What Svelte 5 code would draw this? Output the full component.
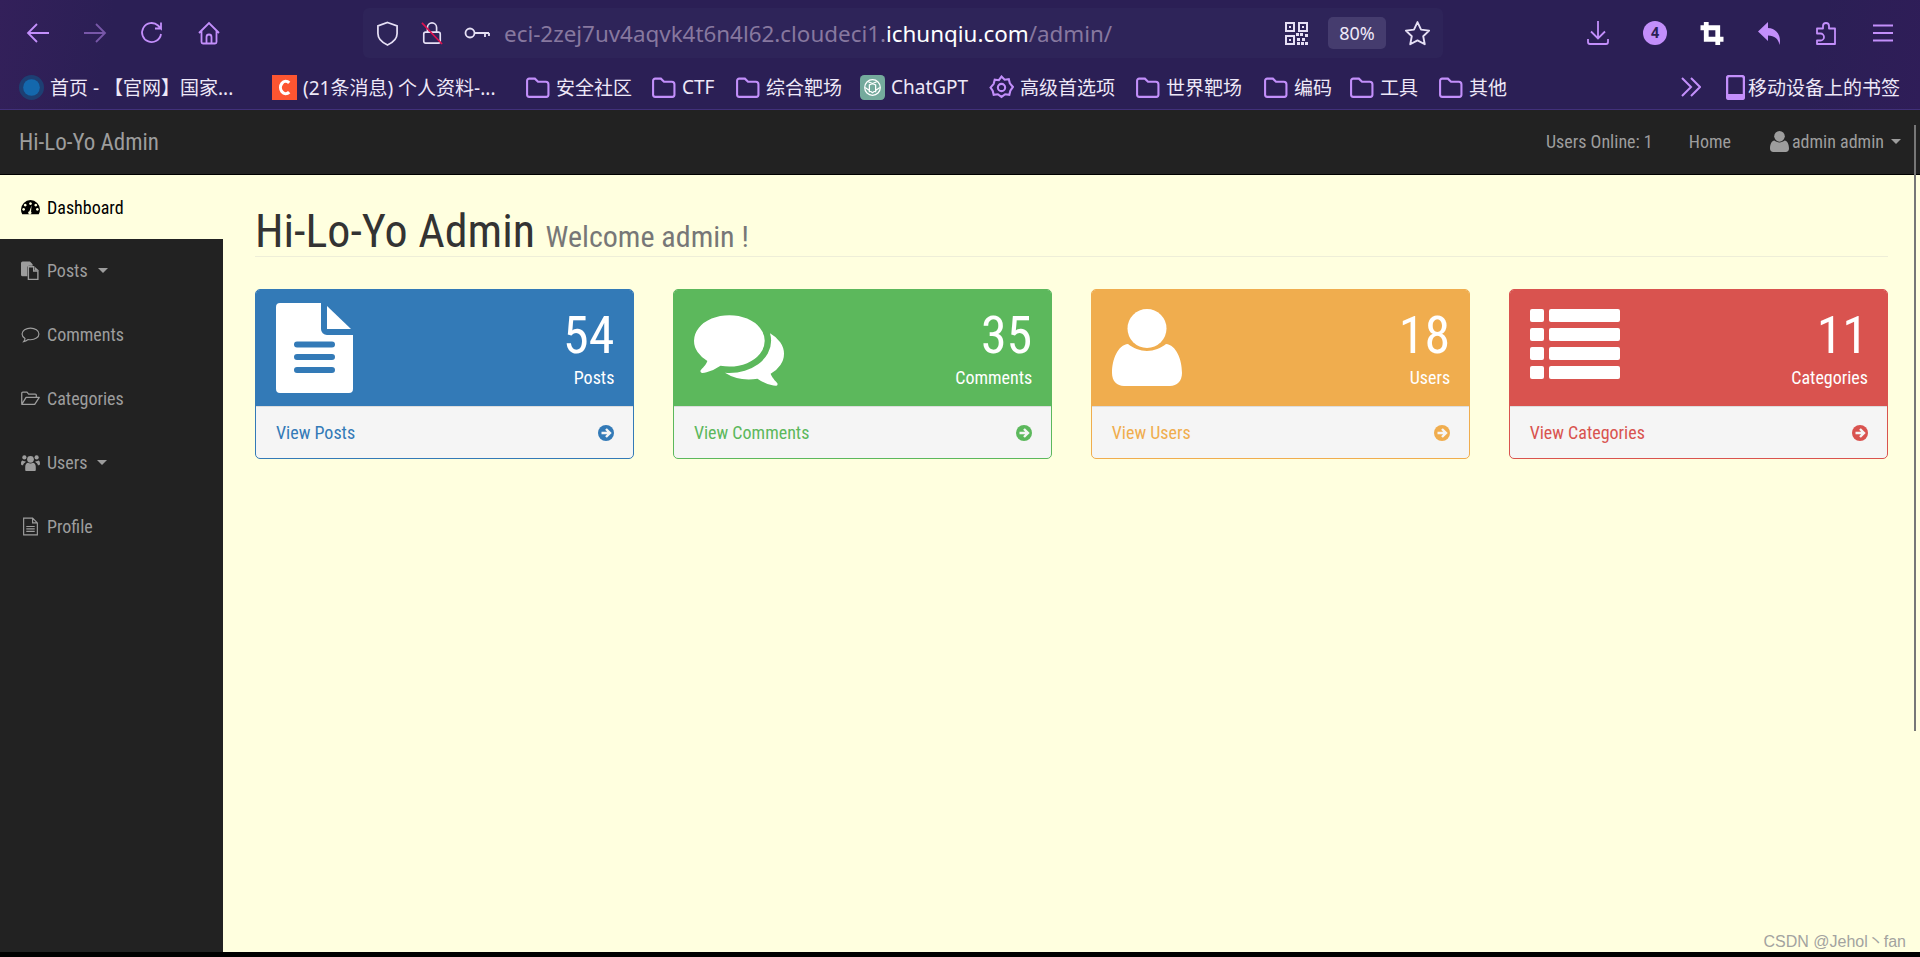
<script>
	const bookmarks = [
		{ icon: 'seal', label: '首页 - 【官网】国家...', width: 186, gap: 36 },
		{ icon: 'csdn', label: '(21条消息) 个人资料-...', width: 197, gap: 25 },
		{ icon: 'folder', label: '安全社区', width: 76, gap: 19 },
		{ icon: 'folder', label: 'CTF', width: 33, gap: 20 },
		{ icon: 'folder', label: '综合靶场', width: 76, gap: 18 },
		{ icon: 'gpt', label: 'ChatGPT', width: 79, gap: 19 },
		{ icon: 'gear', label: '高级首选项', width: 96, gap: 19 },
		{ icon: 'folder', label: '世界靶场', width: 76, gap: 21 },
		{ icon: 'folder', label: '编码', width: 38, gap: 17 },
		{ icon: 'folder', label: '工具', width: 38, gap: 20 },
		{ icon: 'folder', label: '其他', width: 38, gap: 0 },
	]

	const navItems = [
		{ icon: 'gauge', label: 'Dashboard', active: true },
		{ icon: 'files', label: 'Posts', caret: true },
		{ icon: 'comment', label: 'Comments' },
		{ icon: 'open', label: 'Categories' },
		{ icon: 'users', label: 'Users', caret: true },
		{ icon: 'page', label: 'Profile' },
	]

	const cards = [
		{ icon: 'doc', count: 54, label: 'Posts', link: 'View Posts', color: '#337ab7' },
		{ icon: 'chat', count: 35, label: 'Comments', link: 'View Comments', color: '#5cb85c' },
		{ icon: 'user', count: 18, label: 'Users', link: 'View Users', color: '#f0ad4e' },
		{ icon: 'list', count: 11, label: 'Categories', link: 'View Categories', color: '#d9534f' },
	]

	const chatPath =
		'M1408 768q0 139-94 257t-256.5 186.5-353.5 68.5q-86 0-176-16-124 88-278 128-36 9-86 16h-3q-11 0-20.5-8t-11.5-21q-1-3-1-6.5t.5-6.5 2-6l2.5-5 3.5-5.5 4-5 4.5-5 4-4.5q5-6 23-25t26-29.5 22.5-29 25-38.5 20.5-44q-124-72-195-177t-71-224q0-139 94-257t256.5-186.5 353.5-68.5 353.5 68.5 256.5 186.5 94 257zm384 256q0 120-71 224.5t-195 176.5q10 24 20.5 44t25 38.5 22.5 29 26 29.5 23 25q1 1 4 4.5t4.5 5 4 5 3.5 5.5l2.5 5 2 6 .5 6.5-1 6.5q-3 14-13 22t-22 7q-50-7-86-16-154-40-278-128-90 16-176 16-271 0-472-132 58 4 88 4 161 0 309-45t264-129q125-92 192-212t67-254q0-77-23-152 129 71 204 178t75 230z'
</script>

{#snippet bookmarkIcon(name)}
	{#if name === 'folder'}
		<svg class="bm-icon" viewBox="0 0 24 24" fill="none" stroke="#c38ffb" stroke-width="2"><path d="M2 5.500a2 2 0 0 1 2-2h5.500l3 3H20a2.500 2.500 0 0 1 2.500 2.500v10a2 2 0 0 1-2 2H4a2 2 0 0 1-2-2z" /></svg>
	{:else if name === 'seal'}
		<svg class="bm-icon" viewBox="0 0 24 24"><circle cx="12" cy="12" r="12" fill="#1d3f73" /><circle cx="12" cy="12" r="8" fill="#1468ad" /></svg>
	{:else if name === 'csdn'}
		<svg class="bm-icon" viewBox="0 0 24 24"><rect width="24" height="24" fill="#fc5531" /><path d="M16.500 7.500a5 6 0 1 0 0 9" fill="none" stroke="#fff" stroke-width="3" /></svg>
	{:else if name === 'gpt'}
		<svg class="bm-icon" viewBox="0 0 24 24"><rect width="24" height="24" rx="4" fill="#74aa9c" /><g fill="none" stroke="#fff" stroke-width="1.200"><circle cx="12" cy="12" r="7.500" /><path d="M8 6.500l7 3v7M16 6.500l-7 3v7M5 12l7 5 7-5" /></g></svg>
	{:else}
		<svg class="bm-icon" viewBox="0 0 24 24" fill="none" stroke="#c38ffb" stroke-width="2"><path d="M12 1.500l3 3 4-.5 1 4 3 3.500-2.500 3.500-1 4-4-.5-3.500 2.500-3.500-2.500-4 .5-1-4L1.500 12l3-3.500 1-4 4 .5z" /><circle cx="12" cy="12" r="3.500" /></svg>
	{/if}
{/snippet}

{#snippet sideIcon(name)}
	<svg class="side-icon" viewBox="0 -1 18 18">
		{#if name === 'gauge'}
			<path fill-rule="evenodd" d="M9 1a9 9 0 0 1 9 9c0 1.700-.4 3.200-1.200 4.500H1.200A9 9 0 0 1 0 10a9 9 0 0 1 9-9zM4 4.500a1.300 1.300 0 1 0 .01 0zM2.500 8.500a1.300 1.300 0 1 0 .01 0zM14 4.500a1.300 1.300 0 1 0 .01 0zM15.500 8.500a1.300 1.300 0 1 0 .01 0zM9 3a1.300 1.300 0 1 0 .01 0zM10 6l-2 5.500a1.500 1.500 0 1 0 1.500.5z" />
		{:else if name === 'files'}
			<path d="M0 1A1.500 1.500 0 0 1 1.500-.5h7L11 2v1.500H7.500A1.500 1.500 0 0 0 6 5v8.500H1.500A1.500 1.500 0 0 1 0 12z" />
			<path d="M7 4.500h5v4h4V16.400H7z" fill="none" stroke="currentColor" stroke-width="1.300" />
			<path d="M13 4.500l4 3.500h-4z" />
		{:else if name === 'comment'}
			<path d="M9 2c4.300 0 8 2.400 8 5.500S13.300 13 9 13c-.8 0-1.500-.1-2.200-.2-1.200.9-2.500 1.700-4.300 2 .7-.9 1.200-2 1.300-3C2.200 10.800 1 9.200 1 7.500 1 4.400 4.700 2 9 2z" fill="none" stroke="currentColor" stroke-width="1.100" />
		{:else if name === 'open'}
			<path d="M.7 13V3a1 1 0 0 1 1-1h4l1.500 1.800h6.300a1 1 0 0 1 1 1V7M.7 13.500h12.300l4.300-6.500H4.800z" fill="none" stroke="currentColor" stroke-width="1.200" stroke-linejoin="round" />
		{:else if name === 'users'}
			<circle cx="9" cy="5" r="3.200" /><circle cx="3.200" cy="3.200" r="2" /><circle cx="14.800" cy="3.200" r="2" />
			<path d="M4 15v-3c0-2.500 1.500-3.700 2.700-3.700 1.300 1 3.300 1 4.600 0 1.200 0 2.700 1.200 2.700 3.700v3c0 .6-.5 1-1 1H5c-.5 0-1-.4-1-1z" />
			<path d="M0 9c0-2 .7-3 1.500-3 .8.800 2 .900 3 .500-.3.600-.4 1-.4 1.500C2.800 8.500 2 9.800 2 10.500H1c-.6 0-1-.6-1-1.500zM18 9c0-2-.7-3-1.500-3-.8.800-2 .900-3 .500.3.600.4 1 .4 1.500 1.300.5 2.100 1.800 2.100 2.500h1c.6 0 1-.6 1-1.500z" />
		{:else}
			<path d="M2.500.1h8.500l4.500 4.500v11.300h-13zM11 .1v4.500h4.500M5 8h8M5 10.300h8M5 12.600h8" fill="none" stroke="currentColor" stroke-width="1.100" />
		{/if}
	</svg>
{/snippet}

{#snippet cardIcon(name)}
	{#if name === 'doc'}
		<svg class="card-icon doc" viewBox="0 0 77 90" fill="#fff">
			<path fill-rule="evenodd" d="M4 0H45V26a6 6 0 0 0 6 6H77V86a4 4 0 0 1-4 4H4a4 4 0 0 1-4-4V4a4 4 0 0 1 4-4zM21 38.500a2 2 0 0 0 0 6H56a2 2 0 0 0 0-6zM21 51a2 2 0 0 0 0 6H56a2 2 0 0 0 0-6zM21 64a2 2 0 0 0 0 6H56a2 2 0 0 0 0-6z" />
			<path d="M51 3L75 26H51z" />
		</svg>
	{:else if name === 'chat'}
		<svg class="card-icon chat" viewBox="0 256 1792 1408" fill="#fff"><path d={chatPath} /></svg>
	{:else if name === 'user'}
		<svg class="card-icon person" viewBox="0 0 70 77" fill="#fff">
			<circle cx="35" cy="19.500" r="19.500" />
			<path d="M16 35c5 4 12 7 19 7s14-3 19-7c10 1 16 15 16 29 0 8-5 13-12 13H12C5 77 0 72 0 64 0 50 6 36 16 35z" />
		</svg>
	{:else}
		<svg class="card-icon list" viewBox="0 0 90 70" fill="#fff">
			{#each [0, 19, 38, 57] as y}
				<rect {y} width="14" height="13" rx="2" />
				<rect x="19" {y} width="71" height="13" rx="2" />
			{/each}
		</svg>
	{/if}
{/snippet}

<div class="window">
	<header class="chrome">
		<div class="toolbar">
			<div class="tools">
				<svg class="tb first" viewBox="0 0 24 24"><path d="M23 12H2M11 3l-9 9 9 9" /></svg>
				<svg class="tb dim" viewBox="0 0 24 24"><path d="M1 12h21M13 3l9 9-9 9" /></svg>
				<svg class="tb" viewBox="0 0 24 24"><path d="M21 13a9.500 9.500 0 1 1-3-8.500L21 7.500V1.500M21 7.500h-6" /></svg>
				<svg class="tb" viewBox="0 0 24 24"><path d="M2 12L12 2l10 10M4.500 10v11a1.500 1.500 0 0 0 1.500 1.500h12a1.500 1.500 0 0 0 1.500-1.500V10M9.500 22v-6a2.500 2.500 0 0 1 5 0v6" /></svg>
			</div>
			<div class="urlbar">
				<svg class="ub shield" viewBox="0 0 24 26"><path d="M12 1.500l10 3.500v8c0 6-4.500 9.500-10 12C6.500 22.500 2 19 2 13V5z" /></svg>
				<svg class="ub lock" viewBox="0 0 24 26">
					<path d="M5 12h14a2 2 0 0 1 2 2v8a2 2 0 0 1-2 2H5a2 2 0 0 1-2-2v-8a2 2 0 0 1 2-2zM7 12V7a5 5 0 0 1 10 0v5" />
					<path d="M1 2l22 23" class="slash" />
				</svg>
				<svg class="ub key" viewBox="0 0 26 14"><circle cx="6" cy="7" r="4.500" /><path d="M10.500 7H25M21 7v4M25 7v3" /></svg>
				<div class="url">eci-2zej7uv4aqvk4t6n4l62.cloudeci1.<b>ichunqiu.com</b>/admin/</div>
				<svg class="qr" viewBox="0 0 23 23" fill="#e6e0f5">
					<path fill-rule="evenodd" d="M0 0h10v10H0zM2 2v6h6V2zM13 0h10v10H13zM15 2v6h6V2zM0 13h10v10H0zM2 15v6h6v-6z" />
					<path d="M4 4h2v2H4zM17 4h2v2h-2zM4 17h2v2H4zM11 11h3v3h-3zM15 11h3v3h-3zM20 12h3v3h-3zM12 16h3v3h-3zM17 16h3v3h-3zM12 20h3v3h-3zM20 20h3v3h-3zM16 20h3v3h-3z" />
				</svg>
				<div class="zoom-badge">80%</div>
				<svg class="ub star" viewBox="0 0 26 26"><path d="M13 2l3.400 7.200 7.800 1-5.700 5.400 1.500 7.800-7-3.800-7 3.800 1.500-7.800L1.800 10.200l7.800-1z" stroke-linejoin="round" /></svg>
			</div>
			<div class="actions">
				<svg class="tb" viewBox="0 0 24 26"><path d="M12 1v17M5 11.500l7 7 7-7M2 19v3a2 2 0 0 0 2 2h16a2 2 0 0 0 2-2v-3" /></svg>
				<div class="count">4</div>
				<svg class="crop" viewBox="0 0 24 24" fill="none" stroke="#fff" stroke-width="5"><path d="M6 0v18h18M0 6h18v18" /></svg>
				<svg class="reply" viewBox="0 0 22 24" fill="#c38ffb"><path d="M10 1v6c7 .5 12 5 12 13 0 1.500-.3 3-.5 4-1-6-5-9.500-11.500-9.500V20L0 10.500z" /></svg>
				<svg class="tb" viewBox="0 0 24 26"><path d="M3 8.500h6V6a3 3 0 0 1 6 0v2.500h6V24H3v-3.500h3.500a3.500 3.500 0 0 0 0-7H3z" stroke-linejoin="round" /></svg>
				<svg class="tb" viewBox="0 0 24 24"><path d="M2 4.500h20M2 12h20M2 19.500h20" /></svg>
			</div>
		</div>
		<div class="bookmarks">
			{#each bookmarks as b}
				<div class="bm" style="margin-right: {b.gap}px">
					{@render bookmarkIcon(b.icon)}
					<span style="width: {b.width}px">{b.label}</span>
				</div>
			{/each}
			<div class="bm-right">
				<svg class="chevrons" viewBox="0 0 20 20" fill="none" stroke="#c38ffb" stroke-width="2"><path d="M1 1l9 9-9 9M10 1l9 9-9 9" /></svg>
				<svg class="phone" viewBox="0 0 19 25"><rect x="1" y="1" width="17" height="23" rx="2.500" fill="none" stroke="#c38ffb" stroke-width="2.500" /><rect y="19" x="1" width="17" height="5" rx="1" fill="#c38ffb" /></svg>
				<span>移动设备上的书签</span>
			</div>
		</div>
	</header>

	<nav class="navbar">
		<a class="brand" href="#top">Hi-Lo-Yo Admin</a>
		<div class="nav-right">
			<span>Users Online: 1</span>
			<span>Home</span>
			<span class="account">
				<svg class="nav-user" viewBox="0 0 70 77" fill="currentColor">
					<circle cx="35" cy="19.500" r="19.500" />
					<path d="M16 35c5 4 12 7 19 7s14-3 19-7c10 1 16 15 16 29 0 8-5 13-12 13H12C5 77 0 72 0 64 0 50 6 36 16 35z" />
				</svg>
				admin admin<i class="caret"></i>
			</span>
		</div>
	</nav>

	<div class="body">
		<aside class="sidebar">
			{#each navItems as item}
				<a class="side-item" class:active={item.active} href="#top">
					{@render sideIcon(item.icon)}
					{item.label}
					{#if item.caret}<i class="caret"></i>{/if}
				</a>
			{/each}
		</aside>

		<main class="content">
			<h1>Hi-Lo-Yo Admin <small>Welcome admin !</small></h1>
			<div class="cards">
				{#each cards as card}
					<section class="card" style="--accent: {card.color}">
						<div class="card-head">
							{@render cardIcon(card.icon)}
							<div class="stat">
								<div class="count-num">{card.count}</div>
								<div class="count-label">{card.label}</div>
							</div>
						</div>
						<a class="card-foot" href="#top">
							{card.link}
							<svg class="arrow" viewBox="0 0 16 16">
								<circle cx="8" cy="8" r="8" fill="currentColor" />
								<path d="M3.500 8h8M8 4l4 4-4 4" fill="none" stroke="#f5f5f5" stroke-width="2.400" />
							</svg>
						</a>
					</section>
				{/each}
			</div>
		</main>
	</div>
	<div class="bottom-edge"></div>

	<div class="scroll-thumb"></div>
	<div class="watermark">CSDN @Jehol丶fan</div>
</div>

<style>
	:global(body) {
		margin: 0;
		background: #ffffdf;
	}

	.window {
		position: relative;
		display: flex;
		flex-direction: column;
		height: 957px;
		overflow: hidden;
		font-family: Roboto, "Liberation Sans", sans-serif;
		font-stretch: 75%;
		font-size: 18px;
	}

	a {
		color: inherit;
		text-decoration: none;
	}

	/* browser chrome */
	.chrome {
		height: 109px;
		flex: none;
		box-sizing: content-box;
		border-bottom: 1px solid #41307a;
		background: linear-gradient(100deg, #33205a 0, #2b1f55 6%, #2b1f55 94%, #2f1d58 100%);
		font-stretch: 100%;
		color: #eee8f8;
	}

	.toolbar {
		display: flex;
		align-items: center;
		height: 66px;
	}

	.tools {
		display: flex;
		align-items: center;
		gap: 33px;
		width: 363px;
		flex: none;
	}

	.tb {
		width: 24px;
		height: 26px;
		fill: none;
		stroke: #c38ffb;
		stroke-width: 1.800;
	}

	.first {
		margin-left: 26px;
	}

	.dim {
		opacity: 0.5;
	}

	.urlbar {
		display: flex;
		align-items: center;
		box-sizing: border-box;
		width: 1080px;
		height: 50px;
		padding-left: 13px;
		flex: none;
		border-radius: 6px;
		background: #2e2459;
	}

	.ub {
		fill: none;
		stroke: #e6e0f5;
		stroke-width: 1.800;
		flex: none;
	}

	.shield {
		width: 23px;
		height: 25px;
	}

	.lock {
		width: 22px;
		height: 26px;
		margin-left: 22px;
	}

	.slash {
		stroke: #e0114f;
	}

	.key {
		width: 26px;
		height: 14px;
		margin-left: 21px;
	}

	.url {
		width: 781px;
		margin-left: 14px;
		flex: none;
		font-family: "Noto Sans", sans-serif;
		font-size: 22.4px;
		color: #87789f;
		white-space: nowrap;
	}

	.url b {
		font-weight: 400;
		color: #fff;
	}

	.qr {
		width: 23px;
		height: 23px;
		flex: none;
	}

	.zoom-badge {
		width: 58px;
		height: 32px;
		margin-left: 20px;
		border-radius: 5px;
		background: #453c6e;
		font-family: "Noto Sans", sans-serif;
		font-size: 18px;
		line-height: 32px;
		text-align: center;
	}

	.star {
		width: 27px;
		height: 27px;
		margin-left: 18px;
	}

	.actions {
		display: flex;
		align-items: center;
		margin-left: 143px;
		gap: 33px;
	}

	.count {
		width: 24px;
		height: 24px;
		border-radius: 50%;
		background: #c38ffb;
		color: #2b1f55;
		font: 700 15px/24px Roboto, sans-serif;
		text-align: center;
	}

	.crop {
		width: 24px;
		height: 23px;
	}

	.reply {
		width: 24px;
		height: 24px;
	}

	.bookmarks {
		display: flex;
		align-items: center;
		height: 42px;
		padding: 0 0 1px 19px;
		font-family: "Noto Sans", "Noto Sans CJK SC", sans-serif;
		font-size: 19px;
		color: #eee8f8;
	}

	.bm {
		display: flex;
		align-items: center;
		gap: 6px;
		flex: none;
	}

	.bm span {
		white-space: nowrap;
	}

	.bm-icon {
		width: 25px;
		height: 25px;
		flex: none;
	}

	.bm-right {
		display: flex;
		align-items: center;
		margin-left: auto;
		padding-right: 20px;
	}

	.chevrons {
		width: 20px;
		height: 20px;
		margin-right: 25px;
	}

	.phone {
		width: 19px;
		height: 25px;
		margin-right: 3px;
	}

	/* site navbar */
	.navbar {
		display: flex;
		align-items: center;
		justify-content: space-between;
		height: 64px;
		flex: none;
		border-bottom: 1px solid #000;
		background: #222;
		color: #9d9d9d;
	}

	.brand {
		margin-left: 19px;
		font-size: 23px;
	}

	.nav-right {
		display: flex;
		align-items: center;
		gap: 36px;
		padding: 0 19px 2px 0;
	}

	.account {
		display: flex;
		align-items: center;
		gap: 3px;
		margin-left: 3px;
	}

	.nav-user {
		width: 19px;
		height: 21px;
	}

	.caret {
		display: inline-block;
		width: 0;
		height: 0;
		margin-left: 4px;
		border-top: 5px solid;
		border-left: 5px solid transparent;
		border-right: 5px solid transparent;
	}

	.body {
		display: flex;
		flex: 1;
		min-height: 0;
	}

	.sidebar {
		width: 223px;
		flex: none;
		background: #222;
		color: #9d9d9d;
	}

	.side-item {
		display: flex;
		align-items: center;
		box-sizing: border-box;
		height: 64px;
		padding: 0 0 1px 21px;
		gap: 7px;
	}

	.side-item.active {
		padding-bottom: 0;
		background: #ffffdf;
		color: #000;
	}

	.side-item .caret {
		margin-left: 3px;
	}

	.side-icon {
		width: 19px;
		height: 19px;
		fill: currentColor;
	}

	.content {
		flex: 1;
		padding: 31px 32px 0;
		background: #ffffdf;
	}

	h1 {
		margin: 0 0 32px;
		height: 50px;
		border-bottom: 1px solid #eeeed8;
		font-size: 46px;
		font-weight: 400;
		line-height: 50px;
		color: #333;
	}

	small {
		font-size: 30px;
		color: #777;
	}

	.cards {
		display: grid;
		grid-template-columns: repeat(4, 1fr);
		gap: 38.5px;
	}

	.card {
		overflow: hidden;
		border: 1px solid var(--accent);
		border-radius: 5px;
		background: #f5f5f5;
		color: var(--accent);
	}

	.card-head {
		display: flex;
		justify-content: space-between;
		height: 116px;
		padding: 0 19px 0 20px;
		background: var(--accent);
		color: #fff;
	}

	.card-icon {
		display: block;
		flex: none;
	}

	.doc {
		width: 77px;
		height: 90px;
		margin-top: 13px;
	}

	.chat {
		width: 90px;
		height: 71px;
		margin-top: 25px;
	}

	.person {
		width: 70px;
		height: 77px;
		margin-top: 19px;
	}

	.list {
		width: 90px;
		height: 70px;
		margin-top: 19px;
	}

	.stat {
		text-align: right;
	}

	.count-num {
		margin-top: 16px;
		font-size: 52px;
		line-height: 60px;
	}

	.count-label {
		line-height: 24px;
	}

	.card-foot {
		display: flex;
		align-items: center;
		justify-content: space-between;
		height: 51px;
		padding: 0 19px 0 20px;
		border-top: 1px solid #ddd;
	}

	.arrow {
		width: 16px;
		height: 16px;
	}

	.bottom-edge {
		height: 5px;
		flex: none;
		background: #000;
	}

	/* overlays */
	.scroll-thumb {
		position: absolute;
		top: 125px;
		left: 1914px;
		width: 2px;
		height: 606px;
		background: #777;
	}

	.watermark {
		position: absolute;
		right: 14px;
		bottom: 5px;
		font-family: "Liberation Sans", "Noto Sans CJK SC", sans-serif;
		font-stretch: 100%;
		font-size: 16px;
		line-height: 20px;
		color: #a3a3a0;
	}
</style>
